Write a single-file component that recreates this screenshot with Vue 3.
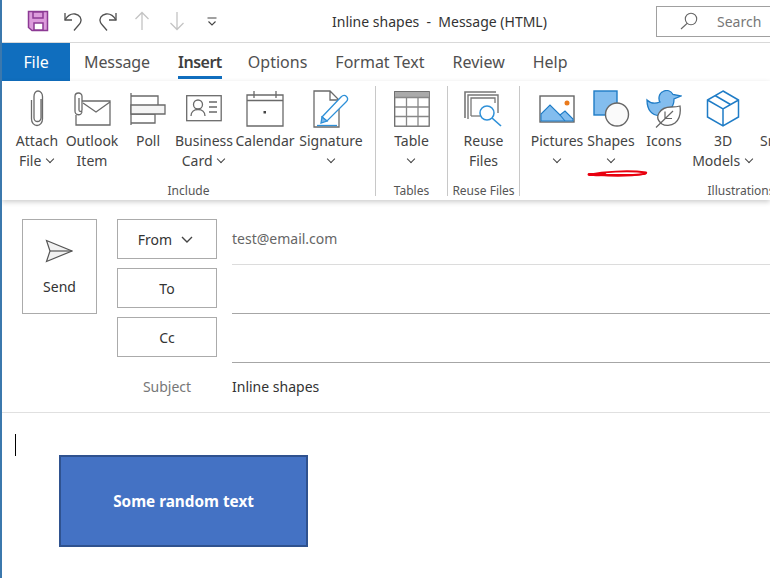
<script setup>
const tabs = ['Message', 'Insert', 'Options', 'Format Text', 'Review', 'Help']
</script>

<template>
  <div class="window">
    <header class="titlebar">
      <div class="quick">
        <svg class="q-save" width="22" height="22" viewBox="0 0 22 22">
          <path d="M1.500 1.500h19v19H5l-3.500-3z" fill="#dc9bdc" stroke="#8c3a94" stroke-width="1.500" />
          <path d="M7 20v-7h9v7z" fill="#fff" stroke="#8c3a94" stroke-width="1.500" />
          <path d="M6 2h10v6H6z" fill="#dc9bdc" stroke="#8c3a94" stroke-width="1.500" />
        </svg>
        <svg class="q-undo" width="20" height="22" viewBox="0 0 20 22" fill="none" stroke="#505050" stroke-width="1.300">
          <path d="M2 3v7h7" />
          <path d="M2 10C5 5 8 3.500 12 4c5 .7 7 5 5.500 8.500-.7 1.600-2 2.600-6.500 8" />
        </svg>
        <svg class="q-redo" width="20" height="22" viewBox="0 0 20 22" fill="none" stroke="#505050" stroke-width="1.300">
          <path d="M18 3v7h-7" />
          <path d="M18 10C15 5 12 3.500 8 4c-5 .7-7 5-5.500 8.500.7 1.600 2 2.600 6.500 8" />
        </svg>
        <svg class="q-up" width="16" height="20" viewBox="0 0 16 20" fill="none" stroke="#c4c4c4" stroke-width="1.300">
          <path d="M8 19V1.500M1.500 8L8 1.500 14.500 8" />
        </svg>
        <svg class="q-down" width="16" height="20" viewBox="0 0 16 20" fill="none" stroke="#c4c4c4" stroke-width="1.300">
          <path d="M8 1v17.500M1.500 12L8 18.500 14.500 12" />
        </svg>
        <svg class="q-more" width="10" height="9" viewBox="0 0 10 9" fill="none" stroke="#444" stroke-width="1.100">
          <path d="M.5 1h9M1.500 4.500L5 8l3.500-3.500" />
        </svg>
      </div>
      <div class="doc-title">Inline shapes&nbsp; -&nbsp; Message (HTML)</div>
      <div class="search">
        <svg width="18" height="18" viewBox="0 0 18 18" fill="none" stroke="#666" stroke-width="1.100">
          <circle cx="11" cy="7" r="5.700" />
          <path d="M7 11.500L1 17" />
        </svg>
        <span>Search</span>
      </div>
    </header>

    <nav class="tabs">
      <div class="tab-file">File</div>
      <div v-for="t in tabs" :key="t" class="tab" :class="{ active: t === 'Insert' }">{{ t }}</div>
    </nav>

    <section class="ribbon">
      <div class="group group-include">
        <div class="group-items">
          <div class="rb w-attach">
            <div class="rb-icon">
              <svg width="16" height="37" viewBox="0 0 16 37" fill="none" stroke="#6a6a6a" stroke-width="1.300">
                <path d="M11 9v19a3.500 3.500 0 0 1-7 0V6.500C4 3.500 5.500 1 8 1s4.500 2.500 4.500 5.500V29a5.500 6.500 0 0 1-11 0V10" transform="translate(1 0)" />
              </svg>
            </div>
            <div class="rb-label">Attach<br />File <i class="chev" /></div>
          </div>
          <div class="rb w-outlook">
            <div class="rb-icon">
              <svg width="40" height="34" viewBox="0 0 40 34" fill="none" stroke="#6a6a6a" stroke-width="1.300">
                <path d="M9 9h29v24H4V23" />
                <path d="M11 11l13 9 14-10" />
                <path d="M7 6v12a1.500 1.500 0 0 0 3 0V4.500C10 2.500 8.500 1 6.500 1S3 2.500 3 4.500V19a3.500 3.500 0 0 0 7 .5" fill="#fff" />
              </svg>
            </div>
            <div class="rb-label">Outlook<br />Item</div>
          </div>
          <div class="rb w-poll">
            <div class="rb-icon">
              <svg width="38" height="34" viewBox="0 0 38 34" fill="none" stroke="#6a6a6a" stroke-width="1.300">
                <path d="M2 1v32M2 4h27v9M2 22h24v9H2" />
                <path d="M2 13h34v9H2z" fill="#f4f4f4" />
              </svg>
            </div>
            <div class="rb-label">Poll</div>
          </div>
          <div class="rb w-biz">
            <div class="rb-icon">
              <svg width="36" height="27" viewBox="0 0 36 27" fill="none" stroke="#6a6a6a" stroke-width="1.300">
                <rect x=".7" y=".7" width="34.500" height="25" />
                <circle cx="12" cy="9.500" r="4.500" />
                <path d="M5 21c0-4 3-6.500 7-6.500s7 2.500 7 6.500M23 7h8M23 12h8M23 17h8" />
              </svg>
            </div>
            <div class="rb-label">Business<br />Card <i class="chev" /></div>
          </div>
          <div class="rb w-cal">
            <div class="rb-icon">
              <svg width="38" height="37" viewBox="0 0 38 37" fill="none" stroke="#6a6a6a" stroke-width="1.300">
                <path d="M1 5h36v31H1zM1 10.500h36M8 1v7M30 1v7" />
                <rect x="17.500" y="21" width="2.500" height="2.500" fill="#444" stroke="none" />
              </svg>
            </div>
            <div class="rb-label">Calendar</div>
          </div>
          <div class="rb w-sig">
            <div class="rb-icon">
              <svg width="36" height="38" viewBox="0 0 36 38" fill="none" stroke-width="1.300">
                <path d="M26 14v23H1V1h16l9 9h-9V1" stroke="#6a6a6a" fill="#fff" />
                <path d="M9 27L28 7c2-2 4-2 5.500-.5s1.500 3.500-.5 5.500L14 31z" stroke="#2e90d8" fill="#fff" />
                <path d="M9 27l5 4-6 2z" fill="#7fb8ea" stroke="#2e90d8" />
                <path d="M4 35.500h20" stroke="#2e90d8" />
              </svg>
            </div>
            <div class="rb-label">Signature<br /><i class="chev" /></div>
          </div>
        </div>
        <div class="group-name">Include</div>
      </div>

      <div class="group group-tables">
        <div class="group-items">
          <div class="rb w-wide">
            <div class="rb-icon">
              <svg width="36" height="36" viewBox="0 0 36 36" fill="none" stroke="#6a6a6a" stroke-width="1.300">
                <rect x=".7" y=".7" width="34.500" height="34.500" />
                <rect x="1" y="1" width="34" height="5.500" fill="#aaa" stroke="none" />
                <path d="M1 6.500h34M1 16h34M1 25.500h34M12.500 6.500V35M24 6.500V35" stroke="#888" />
              </svg>
            </div>
            <div class="rb-label">Table<br /><i class="chev" /></div>
          </div>
        </div>
        <div class="group-name">Tables</div>
      </div>

      <div class="group group-reuse">
        <div class="group-items">
          <div class="rb w-wide">
            <div class="rb-icon">
              <svg width="40" height="36" viewBox="0 0 40 36" fill="none" stroke-width="1.300">
                <path d="M1 27V1h31" stroke="#777" stroke-width="1.600" />
                <path d="M4 28V4h30v18" stroke="#777" stroke-width="1.400" />
                <path d="M7 25V7h24v5" stroke="#777" />
                <path d="M7 25h9" stroke="#777" />
                <circle cx="23" cy="22" r="7" stroke="#2e90d8" stroke-width="1.500" fill="#fff" />
                <path d="M28 27l9 8" stroke="#2e90d8" stroke-width="1.600" />
              </svg>
            </div>
            <div class="rb-label">Reuse<br />Files</div>
          </div>
        </div>
        <div class="group-name">Reuse Files</div>
      </div>

      <div class="group group-illus">
        <div class="group-items">
          <div class="rb w-pic">
            <div class="rb-icon">
              <svg width="36" height="28" viewBox="0 0 36 28" fill="none">
                <rect x="1" y="1" width="34" height="26" fill="#fff" stroke="#666" stroke-width="1.400" />
                <path d="M2 24V19l9-9 10 10 5-4 8 8v2H2z" fill="#83bdee" stroke="#1f7cc6" stroke-width="1.100" />
                <path d="M21 20l5 6" stroke="#1f7cc6" stroke-width="1.100" />
                <circle cx="28" cy="8" r="2.500" fill="#ea7a1c" />
              </svg>
            </div>
            <div class="rb-label">Pictures<br /><i class="chev" /></div>
          </div>
          <div class="rb w-pic">
            <div class="rb-icon">
              <svg class="ic-shapes" width="38" height="37" viewBox="0 0 38 37">
                <rect x="1" y="1" width="23" height="24" fill="#83bdee" stroke="#1f7cc6" stroke-width="1.400" />
                <circle cx="24" cy="24.500" r="11.500" fill="#fafafa" stroke="#666" stroke-width="1.400" />
              </svg>
            </div>
            <div class="rb-label">Shapes<br /><i class="chev" /></div>
          </div>
          <div class="rb w-icons">
            <div class="rb-icon">
              <svg width="36" height="38" viewBox="0 0 36 38">
                <path d="M1 10c3 3 8 4 13 2-2-3-1-9 3-10.500 4-2 8-.5 10 3l8 1.500-7 3c0 4-1 7-3 9l-11 7.500C6 26 1 20 1 10z" fill="#83bdee" stroke="#1f7cc6" stroke-width="1.300" />
                <path d="M34 16c1 8-1 14-5 17-4 3-10 3-13 1-4-3-6-6-3-11 3-5 9-6 12-6 3 0 6 0 9-1z" fill="#fff" stroke="#666" stroke-width="1.300" />
                <path d="M10 37.500L27 21M19 28.500v-7M19 28.500h7" fill="none" stroke="#666" stroke-width="1.200" />
              </svg>
            </div>
            <div class="rb-label">Icons</div>
          </div>
          <div class="rb w-3d">
            <div class="rb-icon">
              <svg width="34" height="37" viewBox="0 0 34 37" fill="none" stroke="#1f7cc6" stroke-width="1.500">
                <path d="M17 1l15.500 9v17L17 36 1.500 27V10zM1.500 10L17 19l15.500-9M17 19v17M9 5.500l15.500 9" />
              </svg>
            </div>
            <div class="rb-label">3D<br />Models <i class="chev" /></div>
          </div>
          <div class="rb w-smart">
            <div class="rb-icon" />
            <div class="rb-label">SmartArt</div>
          </div>
        </div>
        <div class="group-name">Illustrations</div>
      </div>
    </section>

    <section class="compose">
      <button type="button" class="send">
        <svg width="28" height="24" viewBox="0 0 28 24" fill="#f2f2f2" stroke="#555" stroke-width="1.200">
          <path d="M1.500 1.500L27 12 1.500 22.500 5 12z" />
          <path d="M5 12h22" fill="none" />
        </svg>
        <span>Send</span>
      </button>
      <div class="fields">
        <div class="field field-light">
          <button type="button" class="addr addr-from">From <svg width="12" height="7" viewBox="0 0 12 7" fill="none" stroke="#444" stroke-width="1.400"><path d="M1 1l5 5 5-5" /></svg></button>
          <div class="value value-from">test@email.com</div>
        </div>
        <div class="field">
          <button type="button" class="addr">To</button>
          <div class="value" />
        </div>
        <div class="field">
          <button type="button" class="addr">Cc</button>
          <div class="value" />
        </div>
        <div class="subject">
          <div class="subject-label">Subject</div>
          <div class="subject-value">Inline shapes</div>
        </div>
      </div>
    </section>

    <main class="body">
      <div class="caret" />
      <div class="shape">Some random text</div>
    </main>

    <svg class="scribble" width="64" height="12" viewBox="0 0 64 12" fill="none" stroke="#e8000f" stroke-linecap="round">
      <path d="M4 6.500C16 4 42 2 60 4.500 62 6 50 7.500 32 7 20 6.500 10 8 4 6.500z" stroke-width="2" />
      <path d="M3 6.500c12 .5 30 3.500 56-.5" stroke-width="1.500" />
      <path d="M3 6.500h16" stroke-width="2.800" />
    </svg>
  </div>
</template>

<style scoped>
.window {
  position: relative;
  width: 770px;
  height: 578px;
  overflow: hidden;
  box-sizing: border-box;
  border-left: 2px solid #3b78ad;
  background: #fff;
  color: #444;
  font-family: 'Noto Sans', 'Open Sans', sans-serif;
}

.titlebar {
  display: flex;
  align-items: center;
  height: 43px;
  box-sizing: border-box;
  border-bottom: 1px solid #d9d9d9;
}

.quick {
  display: flex;
  align-items: center;
  width: 330px;
  padding-left: 25px;
  box-sizing: border-box;
  flex: none;
}

.q-undo {
  margin-left: 14px;
}

.q-redo {
  margin-left: 15px;
}

.q-up {
  margin-left: 16px;
}

.q-down {
  margin-left: 19px;
}

.q-more {
  margin-left: 22px;
}

.doc-title {
  width: 324px;
  flex: none;
  font-size: 14px;
  color: #333;
  white-space: nowrap;
}

.search {
  display: flex;
  align-items: center;
  gap: 19px;
  width: 130px;
  height: 31px;
  flex: none;
  box-sizing: border-box;
  padding-left: 23px;
  border: 1px solid #a0a0a0;
  font-size: 14px;
  color: #777;
}

.tabs {
  display: flex;
  align-items: stretch;
  height: 38px;
  font-size: 16px;
  letter-spacing: -0.1px;
}

.tab-file {
  width: 68px;
  display: flex;
  align-items: center;
  justify-content: center;
  background: #106ebe;
  color: #fff;
}

.tab {
  padding: 0 14px;
  display: flex;
  align-items: center;
  position: relative;
  color: #505050;
}

.tab.active {
  font-weight: 600;
  color: #404040;
  letter-spacing: -0.5px;
  margin-right: -2px;
}

.tab.active ~ .tab {
  letter-spacing: 0;
}

.tab.active::after {
  content: '';
  position: absolute;
  left: 14px;
  right: 14px;
  bottom: 2px;
  height: 3px;
  background: #106ebe;
}

.ribbon {
  display: flex;
  height: 119px;
  box-sizing: border-box;
  padding-top: 5px;
  box-shadow: 0 2px 5px rgba(0, 0, 0, 0.2);
  position: relative;
  font-size: 14px;
}

.group {
  display: flex;
  flex-direction: column;
  flex: none;
  box-sizing: border-box;
  height: 110px;
  border-right: 1px solid #c8c8c8;
}

.group-include {
  width: 374px;
  padding-left: 10px;
}

.group-tables,
.group-reuse {
  width: 72px;
}

.group-illus {
  width: 432px;
  padding-left: 10px;
  border-right: 0;
}

.group-items {
  display: flex;
  flex: none;
  height: 98px;
}

.group-name {
  text-align: center;
  font-size: 12px;
  line-height: 14px;
  white-space: nowrap;
  color: #555;
}

.group-include .group-name {
  margin-left: -10px;
}

.rb {
  flex: none;
  display: flex;
  flex-direction: column;
  align-items: center;
}

.rb-icon {
  height: 45px;
  display: flex;
  align-items: center;
  justify-content: center;
}

.ic-shapes {
  margin-left: 2px;
}

.rb-label {
  text-align: center;
  line-height: 20px;
  white-space: nowrap;
}

.chev {
  display: inline-block;
  width: 5px;
  height: 5px;
  margin: 0 2px 4px 2px;
  border-right: 1.300px solid #444;
  border-bottom: 1.300px solid #444;
  transform: rotate(45deg);
}

.w-attach {
  width: 50px;
}

.w-outlook {
  width: 60px;
}

.w-poll {
  width: 52px;
}

.w-biz {
  width: 60px;
}

.w-cal {
  width: 62px;
}

.w-sig {
  width: 70px;
}

.w-wide {
  width: 71px;
}

.w-pic {
  width: 54px;
}

.w-icons {
  width: 52px;
}

.w-3d {
  width: 66px;
}

.w-smart {
  width: 60px;
  align-items: flex-start;
  padding-left: 4px;
}

.compose {
  display: flex;
  align-items: flex-start;
  padding: 19px 0 0 20px;
  height: 213px;
  box-sizing: border-box;
  border-bottom: 1px solid #e0e0e0;
}

.send {
  width: 75px;
  height: 95px;
  flex: none;
  display: flex;
  flex-direction: column;
  align-items: center;
  gap: 14px;
  box-sizing: border-box;
  padding: 19px 0 0;
  border: 1px solid #ababab;
  background: #fff;
  color: #333;
  font: inherit;
  font-size: 14px;
}

.send svg {
  margin-right: 2px;
}

.fields {
  flex: 1;
  margin-left: 20px;
  display: flex;
  flex-direction: column;
  gap: 9px;
}

.field {
  display: flex;
  height: 40px;
}

.addr {
  width: 100px;
  flex: none;
  height: 40px;
  box-sizing: border-box;
  display: flex;
  align-items: center;
  justify-content: center;
  gap: 9px;
  border: 1px solid #ababab;
  background: #fff;
  color: #333;
  font: inherit;
  font-size: 14px;
  padding: 0;
}

.addr-from {
  padding-right: 3px;
}

.value {
  flex: 1;
  margin: 0 0 -6px 15px;
  border-bottom: 1px solid #a6a6a6;
  font-size: 14px;
  line-height: 40px;
}

.field-light .value {
  border-bottom-color: #dcdcdc;
}

.value-from {
  color: #666;
}

.subject {
  display: flex;
  align-items: center;
  height: 40px;
  font-size: 14px;
}

.subject-label {
  width: 100px;
  text-align: center;
  color: #777;
}

.subject-value {
  margin-left: 15px;
  color: #333;
}

.body {
  position: relative;
  padding: 42px 0 0 57px;
}

.caret {
  position: absolute;
  left: 13px;
  top: 21px;
  width: 1px;
  height: 22px;
  background: #000;
}

.shape {
  width: 249px;
  height: 92px;
  box-sizing: border-box;
  display: flex;
  align-items: center;
  justify-content: center;
  border: 2px solid #2f528f;
  background: #4472c4;
  color: #fff;
  font-size: 15.300px;
  font-weight: 700;
}

.scribble {
  position: absolute;
  left: 584px;
  top: 168px;
}
</style>

<style>
html,
body {
  margin: 0;
  overflow: hidden;
}
</style>
